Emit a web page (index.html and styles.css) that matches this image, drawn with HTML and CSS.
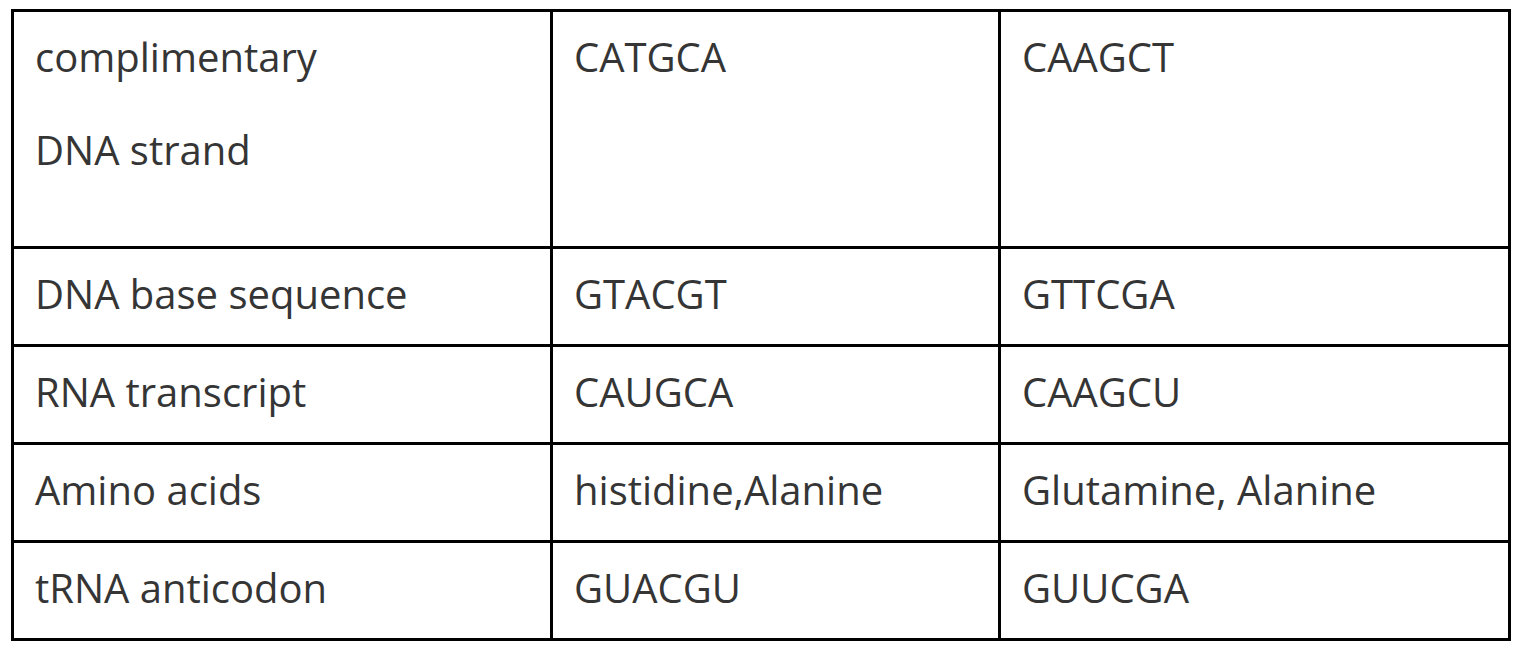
FILE: index.html
```html
<!DOCTYPE html>
<html>
<head>
<meta charset="utf-8">
<link rel="stylesheet" href="styles.css">
</head>
<body>
<table class="grid">
  <tr class="tall">
    <td class="c1"><p class="para">complimentary</p><p class="para">DNA strand</p></td>
    <td class="c2">CATGCA</td>
    <td class="c3">CAAGCT</td>
  </tr>
  <tr>
    <td class="c1">DNA base sequence</td>
    <td class="c2">GTACGT</td>
    <td class="c3">GTTCGA</td>
  </tr>
  <tr>
    <td class="c1">RNA transcript</td>
    <td class="c2">CAUGCA</td>
    <td class="c3">CAAGCU</td>
  </tr>
  <tr>
    <td class="c1">Amino acids</td>
    <td class="c2">histidine,Alanine</td>
    <td class="c3">Glutamine, Alanine</td>
  </tr>
  <tr>
    <td class="c1">tRNA anticodon</td>
    <td class="c2">GUACGU</td>
    <td class="c3">GUUCGA</td>
  </tr>
</table>
</body>
</html>
```
FILE: styles.css
```css
html, body {
  margin: 0;
  background: #fff;
}
body {
  padding: 9px 11px;
  font-family: "Open Sans", "Liberation Sans", sans-serif;
  font-size: 40px;
  color: #353535;
}
.grid {
  border-collapse: separate;
  border-spacing: 0;
  border-top: 3px solid #000;
  border-left: 3px solid #000;
  table-layout: fixed;
  width: 1500px;
}
.grid td {
  border-right: 3px solid #000;
  border-bottom: 3px solid #000;
  padding: 21px 22px 27px 21px;
  line-height: 47px;
  height: 47px;
  vertical-align: top;
  box-sizing: content-box;
  white-space: nowrap;
}
.grid .c1 { width: 493px; }
.grid .c2 { width: 402px; }
.grid .c3 { width: 464px; }
.para {
  margin: 0 0 46px 0;
}
```
